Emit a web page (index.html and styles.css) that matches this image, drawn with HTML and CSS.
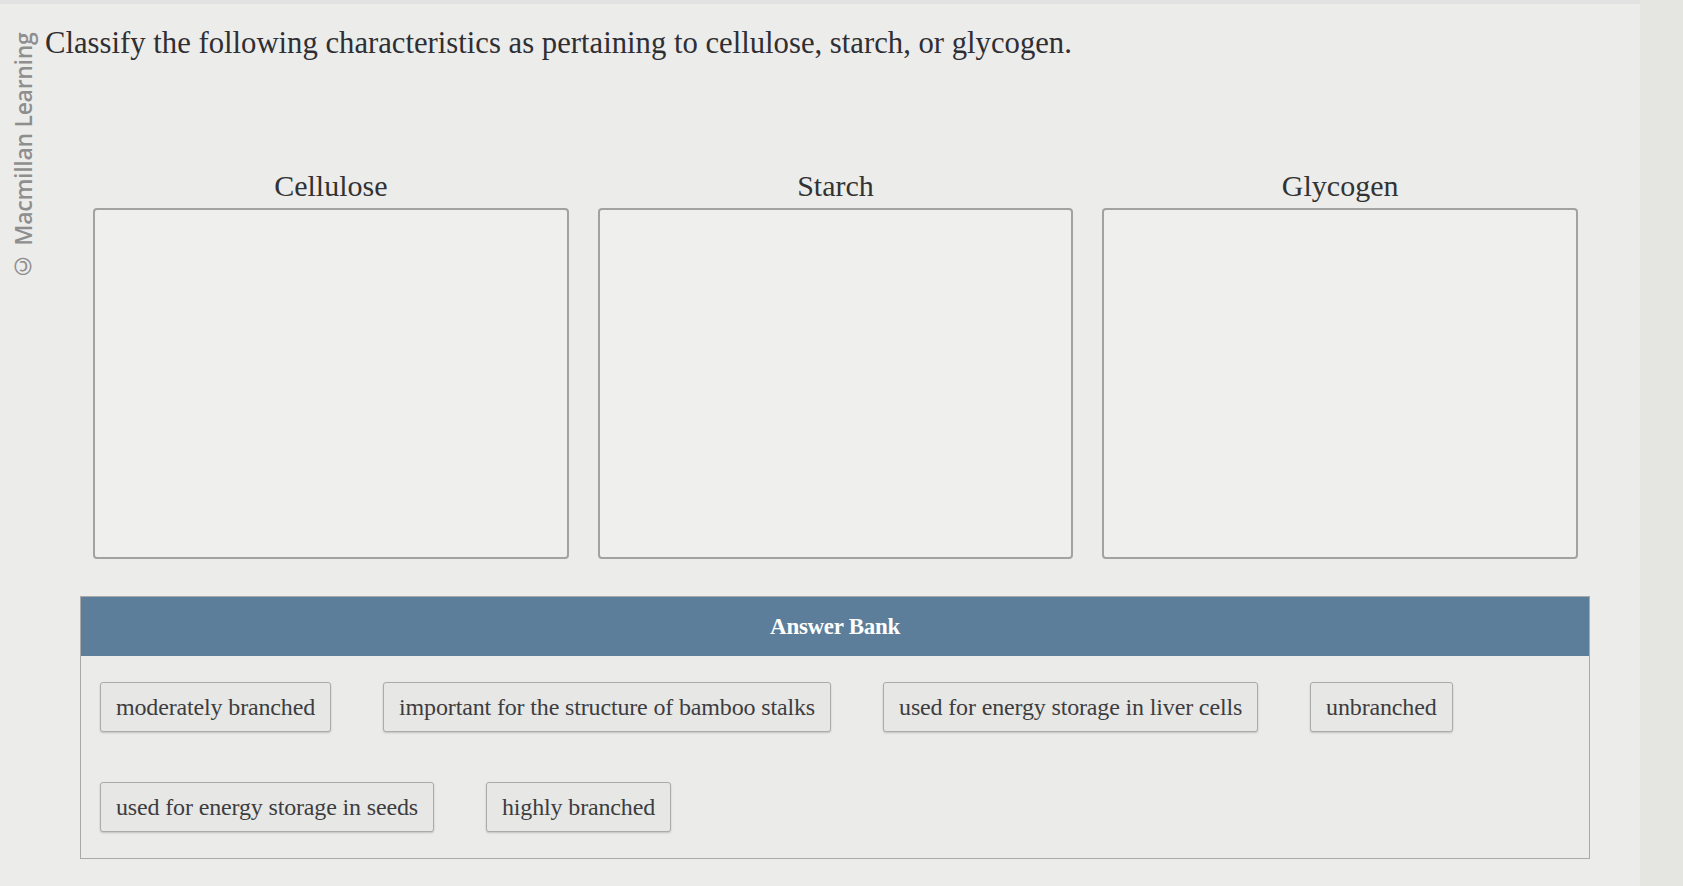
FILE: index.html
```html
<!DOCTYPE html>
<html lang="en">
<head>
<meta charset="utf-8">
<title>Classify</title>
<link rel="stylesheet" href="styles.css">
</head>
<body>
<div class="screen">
  <div class="panel">
    <div class="watermark"><span>© Macmillan Learning</span></div>
    <div class="content">
      <h1 class="question">Classify the following characteristics as pertaining to cellulose, starch, or glycogen.</h1>
      <div class="bins">
        <div class="bin">
          <div class="bin-title">Cellulose</div>
          <div class="bin-box"></div>
        </div>
        <div class="bin">
          <div class="bin-title">Starch</div>
          <div class="bin-box"></div>
        </div>
        <div class="bin">
          <div class="bin-title">Glycogen</div>
          <div class="bin-box"></div>
        </div>
      </div>
      <div class="bank">
        <div class="bank-head">Answer Bank</div>
        <div class="bank-body">
          <div class="chip">moderately branched</div>
          <div class="chip">important for the structure of bamboo stalks</div>
          <div class="chip">used for energy storage in liver cells</div>
          <div class="chip">unbranched</div>
          <div class="chip">used for energy storage in seeds</div>
          <div class="chip">highly branched</div>
        </div>
      </div>
    </div>
  </div>
  <div class="edge"></div>
</div>
</body>
</html>
```
FILE: styles.css
```css
html, body {
  margin: 0;
  padding: 0;
}
body {
  background: #e4e4e1;
  width: 1683px;
  height: 886px;
  overflow: hidden;
  font-family: "Liberation Serif", "Times New Roman", serif;
  color: #333;
}
.screen {
  display: flex;
  height: 886px;
}
.panel {
  width: 1640px;
  background: #ececeb;
  display: flex;
  border-top: 4px solid #e2e2e2;
}
.edge {
  flex: 1;
  background: #e5e5e1;
}
.watermark {
  width: 45px;
  flex: none;
  display: flex;
  justify-content: center;
  padding-top: 35px;
  box-sizing: border-box;
}
.watermark span {
  writing-mode: vertical-rl;
  transform: rotate(180deg);
  font-family: "Open Sans", "DejaVu Sans", sans-serif;
  font-size: 23px;
  font-weight: 600;
  color: #8e8e8e;
  height: 244px;
  text-align: right;
  white-space: nowrap;
  letter-spacing: -0.3px;
}
.content {
  flex: 1;
  display: flex;
  flex-direction: column;
}
.question {
  margin: 21px 0 0 0;
  font-size: 30.7px;
  font-weight: normal;
  line-height: 37px;
  color: #2f2f33;
}
.bins {
  margin: 106px 0 0 48px;
  width: 1485px;
  display: grid;
  grid-template-columns: repeat(3, 1fr);
  column-gap: 29px;
}
.bin {
  display: flex;
  flex-direction: column;
  align-items: center;
}
.bin-title {
  font-size: 30px;
  line-height: 36px;
  color: #333;
  margin-bottom: 4px;
}
.bin-box {
  width: 100%;
  height: 351px;
  box-sizing: border-box;
  border: 2px solid #a2a2a2;
  border-radius: 4px;
  background: #efefee;
}
.bank {
  margin: 37px 0 0 35px;
  width: 1508px;
  border: 1px solid #a9a9a9;
  background: #ebebea;
}
.bank-head {
  height: 59px;
  background: #5c7e9b;
  color: #fff;
  font-weight: bold;
  font-size: 23px;
  display: flex;
  align-items: center;
  justify-content: center;
  letter-spacing: -0.3px;
}
.bank-body {
  display: flex;
  flex-wrap: wrap;
  column-gap: 52px;
  row-gap: 50px;
  padding: 26px 20px 26px 19px;
}
.chip {
  height: 50px;
  box-sizing: border-box;
  padding: 0 15px;
  display: flex;
  align-items: center;
  font-size: 24px;
  color: #3d3d40;
  background: #e7e7e6;
  border: 1px solid #ababab;
  border-radius: 3px;
  box-shadow: 0 1px 2px rgba(0, 0, 0, 0.18);
  letter-spacing: -0.15px;
}
```
